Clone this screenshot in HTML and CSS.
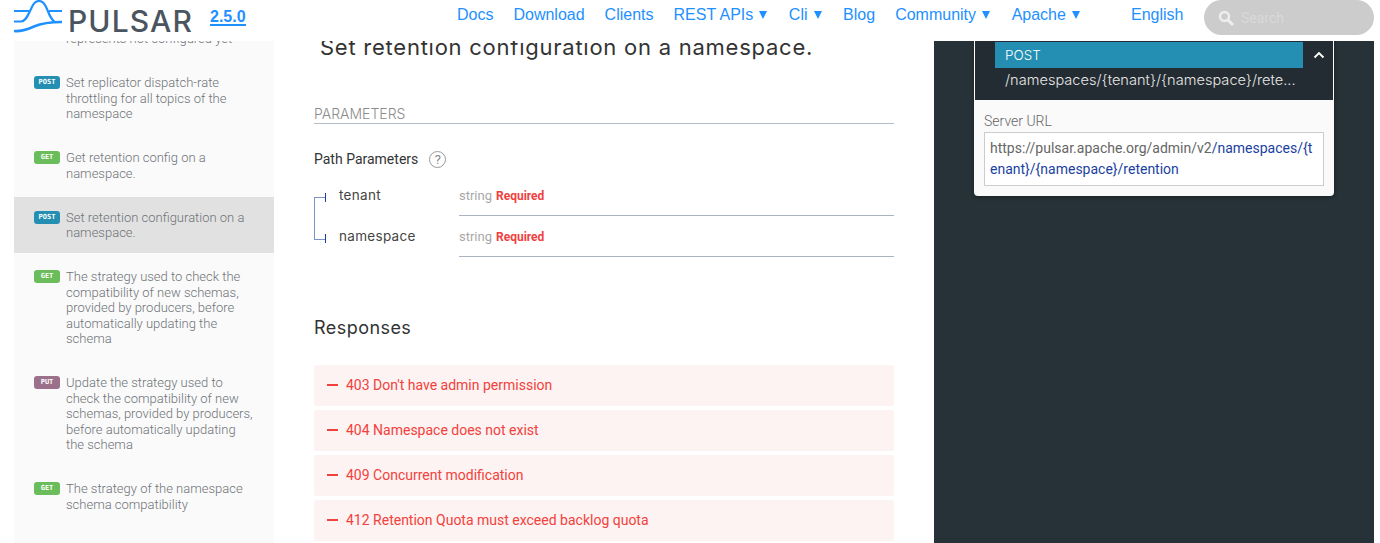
FILE: index.html
```html
<!DOCTYPE html>
<html lang="en">
<head>
<meta charset="utf-8">
<title>Pulsar Admin API</title>
<link rel="stylesheet" href="styles.css">
</head>
<body>
<header class="topbar">
  <a class="logo">
    <svg class="logo-mark" viewBox="0 0 48 33" width="48" height="33" aria-hidden="true">
      <path d="M0 21.5H7C12 21.5 14 15 17 9C19 4 22 1 25 1C29 1 31 4 33 9C35 14 37 20 41 22" fill="none" stroke="#1e90ff" stroke-width="2.2"/>
      <path d="M0 11H15M35 11H48" fill="none" stroke="#1e90ff" stroke-width="2.2"/>
      <path d="M0 31C8 32 14 29 20 26.5C27 23.5 36 22 48 22" fill="none" stroke="#1e90ff" stroke-width="2.6"/>
    </svg>
    <span class="logo-text">PULSAR</span>
  </a>
  <a class="version">2.5.0</a>
  <nav class="nav">
    <a>Docs</a><a>Download</a><a>Clients</a><a>REST APIs<span class="caret"></span></a><a>Cli<span class="caret"></span></a><a>Blog</a><a>Community<span class="caret"></span></a><a>Apache<span class="caret"></span></a>
  </nav>
  <a class="lang">English</a>
  <div class="search">
    <svg viewBox="0 0 16 16" width="16" height="16" aria-hidden="true"><circle cx="6.5" cy="6.5" r="4.5" fill="none" stroke="#eee" stroke-width="2.4"/><path d="M10 10l5 5" stroke="#eee" stroke-width="3"/></svg>
    <span>Search</span>
  </div>
</header>
<div class="page">
  <aside class="sidebar">
    <div class="side-list">
      <div class="side-item cut"><span class="side-text">represents not configured yet</span></div>
      <div class="side-item"><span class="badge post">POST</span><span class="side-text">Set replicator dispatch-rate throttling for all topics of the namespace</span></div>
      <div class="side-item"><span class="badge get">GET</span><span class="side-text">Get retention config on a namespace.</span></div>
      <div class="side-item active"><span class="badge post">POST</span><span class="side-text">Set retention configuration on a namespace.</span></div>
      <div class="side-item"><span class="badge get">GET</span><span class="side-text">The strategy used to check the compatibility of new schemas, provided by producers, before automatically updating the schema</span></div>
      <div class="side-item"><span class="badge put">PUT</span><span class="side-text">Update the strategy used to check the compatibility of new schemas, provided by producers, before automatically updating the schema</span></div>
      <div class="side-item"><span class="badge get">GET</span><span class="side-text">The strategy of the namespace schema compatibility</span></div>
    </div>
  </aside>
  <main class="content">
    <h2 class="op-title">Set retention configuration on a namespace.</h2>
    <h5 class="section-label">PARAMETERS</h5>
    <div class="path-head">
      <span>Path Parameters</span>
      <span class="help">?</span>
    </div>
    <div class="param">
      <div class="param-name first"><span class="tick"></span><span>tenant</span></div>
      <div class="param-info"><span class="type">string</span> <span class="req">Required</span></div>
    </div>
    <div class="param">
      <div class="param-name last"><span class="tick"></span><span>namespace</span></div>
      <div class="param-info"><span class="type">string</span> <span class="req">Required</span></div>
    </div>
    <h3 class="resp-title">Responses</h3>
    <div class="resp"><span class="dash"></span>403 Don't have admin permission</div>
    <div class="resp"><span class="dash"></span>404 Namespace does not exist</div>
    <div class="resp"><span class="dash"></span>409 Concurrent modification</div>
    <div class="resp"><span class="dash"></span>412 Retention Quota must exceed backlog quota</div>
  </main>
  <section class="dark">
    <div class="card">
      <div class="endpoint">
        <div class="method-row">
          <span class="method">POST</span>
          <svg class="chev" viewBox="0 0 12 8" width="12" height="8" aria-hidden="true"><path d="M1.5 6.5L6 2l4.5 4.5" fill="none" stroke="#fff" stroke-width="1.8"/></svg>
        </div>
        <div class="endpoint-path">/namespaces/{tenant}/{namespace}/rete...</div>
      </div>
      <div class="server">
        <div class="server-label">Server URL</div>
        <div class="server-box">https://pulsar.apache.org/admin/v2<span class="url-path">/namespaces/{tenant}/{namespace}/retention</span></div>
      </div>
    </div>
  </section>
</div>
</body>
</html>
```
FILE: styles.css
```css
* { box-sizing: border-box; }
html, body { margin: 0; padding: 0; height: 543px; overflow: hidden; background: #fff; }
body { font-family: Roboto, "Liberation Sans", sans-serif; color: #333; }

.topbar { height: 41px; display: flex; align-items: flex-start; background: #fff; padding-left: 14px; position: relative; z-index: 2; overflow: hidden; }
.logo { display: flex; align-items: flex-start; width: 180px; }
.logo-mark { display: block; flex: none; }
.logo-text { font-family: Inter, "Liberation Sans", sans-serif; font-size: 30px; line-height: 34px; letter-spacing: 1.1px; color: #4a5560; margin: 4px 0 0 6px; font-weight: 500; }
.version { font-family: "Liberation Sans", sans-serif; font-size: 16px; font-weight: 700; line-height: 18px; margin: 8px 0 0 16px; color: #1e90ff; border-bottom: 2px solid #1e90ff; height: 18px; }
.nav { display: flex; gap: 20px; position: absolute; left: 457px; top: 5px; font-family: "Liberation Sans", sans-serif; font-size: 16px; line-height: 20px; color: #1e90ff; }
.caret { display: inline-block; width: 0; height: 0; margin: 0 1.6px 1px 6px; border-left: 4px solid transparent; border-right: 4px solid transparent; border-top: 8px solid #1e90ff; }
.lang { position: absolute; left: 1131px; top: 5px; font-family: "Liberation Sans", sans-serif; font-size: 16px; line-height: 20px; color: #1e90ff; }
.search { position: absolute; left: 1204px; top: 0; width: 170px; height: 35px; border-radius: 18px; background: #ccc; display: flex; align-items: center; padding-left: 14px; gap: 7px; font-size: 14px; color: #d9d9d9; }

.page { display: flex; height: 502px; padding-left: 14px; padding-right: 6px; overflow: hidden; }
.sidebar { width: 260px; flex: none; background: #fafafa; overflow: hidden; }
.side-list { margin-top: -12px; }
.side-item { display: flex; padding: 12.5px 20px; margin-bottom: 3.5px; font-size: 13px; line-height: 15.5px; color: #6e7378; font-weight: 300; }
.side-item.cut { padding: 2.25px 20px 12.5px 52px; }
.side-item.active { background: #e1e1e1; }
.badge { flex: none; width: 26px; height: 13px; margin-top: 1px; margin-right: 6px; border-radius: 3px; color: #fff; font-family: "DejaVu Sans Mono", monospace; font-size: 7px; font-weight: 700; line-height: 13px; text-align: center; }
.badge.post { background: #248fb2; }
.badge.get { background: #6bbd5b; }
.badge.put { background: #9b708b; }

.content { width: 660px; flex: none; padding: 0 40px; background: #fff; overflow: hidden; }
.op-title { font-family: Inter, sans-serif; font-weight: 400; font-size: 22px; line-height: 27px; letter-spacing: .75px; color: #333; margin: -7px 0 0 6px; white-space: nowrap; }
.section-label { font-family: Inter, sans-serif; font-weight: 300; font-size: 14px; line-height: 17px; color: #8c8c8c; margin: 44px 0 0; padding-bottom: 1px; border-bottom: 1px solid #b4bcc6; }
.path-head { display: flex; align-items: center; gap: 11px; margin: 26px 0 7px; font-size: 14px; line-height: 18px; }
.help { width: 17px; height: 17px; border: 1px solid #999; border-radius: 50%; font-size: 13px; line-height: 15px; text-align: center; color: #888; }
.param { display: flex; height: 41px; }
.param-name { width: 145px; flex: none; position: relative; font-family: Inter, sans-serif; font-size: 13.5px; letter-spacing: .3px; padding: 11px 0 0 25px; line-height: 18px; color: #444; }
.param-name.first::before { content: ""; position: absolute; left: 0; top: 22px; width: 11px; height: 41px; border-left: 1px solid #7b93c9; border-top: 1px solid #7b93c9; }
.param-name.last::before { content: ""; position: absolute; left: 0; top: 0; width: 11px; height: 22.5px; border-left: 1px solid #7b93c9; border-bottom: 1px solid #7b93c9; }
.tick { position: absolute; left: 11px; top: 18px; width: 1px; height: 9px; background: #1a3fa0; }
.param-info { flex: 1; padding-top: 11px; line-height: 18px; border-bottom: 1px solid #a9b4c0; }
.type { color: #a8a8a8; font-size: 13px; }
.req { color: #f03f3f; font-weight: 700; font-size: 12px; }
.resp-title { font-family: Inter, sans-serif; font-weight: 400; font-size: 18px; letter-spacing: .45px; line-height: 24px; color: #333; margin: 59px 0 25px; }
.resp { display: flex; align-items: center; height: 41px; margin-bottom: 4px; padding-bottom: 2px; background: #fdf3f2; border-radius: 2px; color: #f2413c; font-size: 14px; padding-left: 13px; }
.dash { width: 11px; height: 2px; background: #f2413c; margin-right: 8px; }

.dark { flex: 1; background: #263238; padding-left: 40px; padding-right: 40px; overflow: hidden; }
.card { width: 360px; background: #fafafa; border-radius: 0 0 4px 4px; box-shadow: 0 1px 4px rgba(0,0,0,.4); margin-top: -14px; }
.endpoint { height: 73px; background: #232c32; border: 1px solid #fff; border-top: 0; border-bottom: 0; padding: 15px 0 0 20px; }
.method-row { display: flex; align-items: center; }
.method { width: 308px; height: 26px; background: #248fb2; color: #fff; font-family: Inter, sans-serif; font-size: 13.5px; line-height: 26px; padding-left: 10px; font-weight: 300; }
.chev { margin-left: 10px; }
.endpoint-path { font-family: Inter, sans-serif; color: #e6e6e6; font-size: 14.6px; line-height: 23px; padding: 1px 0 0 10px; font-weight: 300; white-space: nowrap; }
.server { padding: 12px 10px 10px; }
.server-label { font-size: 14px; line-height: 18px; color: #666; font-weight: 300; }
.server-box { margin-top: 2px; height: 54px; background: #fff; border: 1px solid #ccc; padding: 5px 5px; font-size: 14px; line-height: 21px; color: #666; word-break: break-all; }
.url-path { color: #1a3fa0; }
```
